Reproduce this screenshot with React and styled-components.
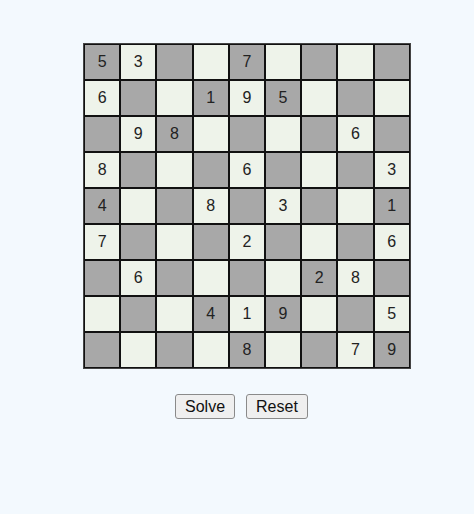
import React from "react";
import styled, { createGlobalStyle } from "styled-components";

const Global = createGlobalStyle`
  html, body { margin: 0; padding: 0; background: #f3f9fe; }
  body { font-family: "Liberation Sans", Arial, sans-serif; min-height: 100vh; }
`;

const Page = styled.div`
  display: flex;
  flex-direction: column;
  align-items: flex-start;
  padding: 43px 0 0 83px;
`;

const Board = styled.div`
  display: grid;
  grid-template-columns: repeat(9, 36.2px);
  grid-auto-rows: 36px;
  border: 1px solid #444;
`;

const Cell = styled.div`
  display: flex;
  align-items: center;
  justify-content: center;
  border: 1px solid #111;
  background: ${(p) => (p.$dark ? "#a8a8a8" : "#eef3ea")};
  color: #222;
  font-size: 16px;
`;

const Controls = styled.div`
  display: flex;
  gap: 11px;
  margin: 25px 0 0 92px;
`;

const Button = styled.button`
  font-family: "Liberation Sans", Arial, sans-serif;
  font-size: 16px;
  color: #111;
  background: #efefef;
  border: 1px solid #8a8a8a;
  border-radius: 3px;
  padding: 2px 9px;
  height: 25px;
  cursor: pointer;
`;

const puzzle = [
  "53..7....",
  "6..195...",
  ".98....6.",
  "8...6...3",
  "4..8.3..1",
  "7...2...6",
  ".6....28.",
  "...419..5",
  "....8..79",
];

export default function App() {
  return (
    <>
      <Global />
      <Page>
        <Board>
          {puzzle.map((row, r) =>
            row.split("").map((ch, c) => (
              <Cell key={`${r}-${c}`} $dark={(r + c) % 2 === 0}>
                {ch === "." ? "" : ch}
              </Cell>
            ))
          )}
        </Board>
        <Controls>
          <Button>Solve</Button>
          <Button>Reset</Button>
        </Controls>
      </Page>
    </>
  );
}
